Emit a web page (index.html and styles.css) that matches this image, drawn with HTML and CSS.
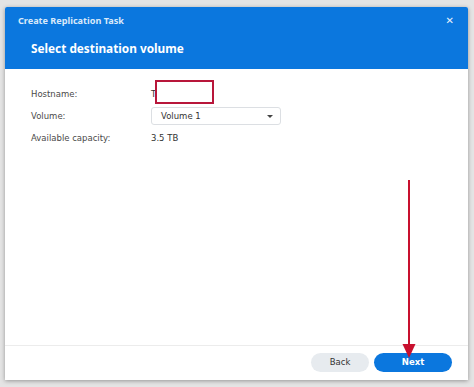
FILE: index.html
```html
<!DOCTYPE html>
<html>
<head>
<meta charset="utf-8">
<link rel="stylesheet" href="styles.css">
</head>
<body>
<div class="desktop">
  <div class="dialog">
    <div class="header">
      <div class="titlebar">
        <span class="title">Create Replication Task</span>
        <span class="close">&#x2715;</span>
      </div>
      <div class="step">Select destination volume</div>
    </div>
    <div class="body">
      <div class="row">
        <span class="label">Hostname:</span>
        <span class="value">T</span>
      </div>
      <div class="row">
        <span class="label">Volume:</span>
        <div class="select"><span>Volume 1</span><span class="caret"></span></div>
      </div>
      <div class="row">
        <span class="label">Available capacity:</span>
        <span class="value">3.5 TB</span>
      </div>
    </div>
    <div class="footer">
      <button class="btn back">Back</button>
      <button class="btn next">Next</button>
    </div>
    <div class="redbox"></div>
    <svg class="arrow" width="16" height="180" viewBox="0 0 16 180">
      <line x1="8" y1="0" x2="8" y2="166" stroke="#c8102e" stroke-width="2"/>
      <polygon points="1.5,164 14.5,164 8,178" fill="#c8102e"/>
    </svg>
  </div>
</div>
</body>
</html>
```
FILE: styles.css
```css
html, body {
  margin: 0;
  padding: 0;
}
body {
  width: 474px;
  height: 387px;
  background: #e4e4e4;
  font-family: "DejaVu Sans", Verdana, sans-serif;
  overflow: hidden;
}
.desktop {
  padding: 7px 0 0 5px;
}
.dialog {
  position: relative;
  width: 463px;
  height: 373px;
  background: #ffffff;
  display: flex;
  flex-direction: column;
  box-shadow: 0 1px 4px rgba(0,0,0,0.35);
  border-radius: 2px 2px 0 0;
}
.header {
  background: #0b77de;
  height: 62px;
  box-sizing: border-box;
  padding: 0 0 0 13px;
  color: #fff;
  border-radius: 2px 2px 0 0;
}
.titlebar {
  display: flex;
  align-items: center;
  justify-content: space-between;
  height: 26px;
  padding-right: 14px;
}
.title {
  font-family: "Noto Sans", sans-serif;
  font-size: 9.1px;
  font-weight: bold;
  color: #d9e9fa;
}
.close {
  font-size: 10px;
  font-weight: bold;
  color: #e8f1fb;
}
.step {
  margin-left: 13px;
  margin-top: 7px;
  font-family: "Noto Sans", sans-serif;
  font-size: 11.8px;
  font-weight: bold;
  color: #fff;
}
.body {
  flex: 1;
  padding: 16px 0 0 26px;
  display: flex;
  flex-direction: column;
  gap: 4px;
}
.row {
  display: flex;
  align-items: center;
  height: 18px;
  font-size: 8.5px;
  color: #4a4a4a;
}
.label {
  width: 120px;
}
.value {
  color: #333;
}
.select {
  width: 130px;
  height: 18px;
  box-sizing: border-box;
  border: 1px solid #dcdfe3;
  border-radius: 3px;
  display: flex;
  align-items: center;
  justify-content: space-between;
  padding: 0 7px 0 9px;
  color: #333;
}
.caret {
  width: 0;
  height: 0;
  border-left: 3px solid transparent;
  border-right: 3px solid transparent;
  border-top: 3px solid #444;
}
.footer {
  height: 32px;
  border-top: 1px solid #ececec;
  display: flex;
  justify-content: flex-end;
  align-items: center;
  gap: 5px;
  padding-right: 16px;
  padding-bottom: 2px;
}
.btn {
  height: 19px;
  border: none;
  border-radius: 10px;
  font-family: "DejaVu Sans", Verdana, sans-serif;
  font-size: 8.5px;
  padding: 0;
}
.back {
  width: 58px;
  background: #e7ebef;
  color: #333;
}
.next {
  width: 78px;
  background: #0b77de;
  color: #fff;
  font-weight: bold;
}
.redbox {
  position: absolute;
  left: 150px;
  top: 73px;
  width: 59px;
  height: 24px;
  box-sizing: border-box;
  border: 2.5px solid #b8163a;
  background: #fff;
}
.arrow {
  position: absolute;
  left: 396px;
  top: 173px;
}
```
